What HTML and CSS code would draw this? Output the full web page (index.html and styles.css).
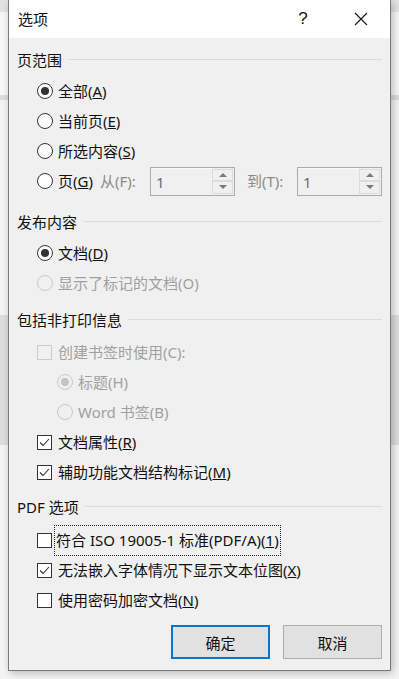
FILE: index.html
```html
<!DOCTYPE html>
<html>
  <head>
    <title>选项</title>
    <link rel="stylesheet" href="styles.css">
  </head>
  <body>

    <div class="dialog">

      <!-- TITLE BAR -->
      <div class="titlebar">
        <span class="title">选项</span>
        <span class="help">?</span>
        <span class="close">
          <svg width="14" height="14" viewBox="0 0 14 14">
            <path d="M1 1 L13 13 M13 1 L1 13" stroke="#1a1a1a" stroke-width="1.2" fill="none"/>
          </svg>
        </span>
      </div>

      <div class="content">

        <!-- PAGE RANGE -->
        <div class="group first">
          <div class="groupHead h31">页范围</div>

          <div class="row">
            <span class="radio checked"></span>
            <span>全部(<u>A</u>)</span>
          </div>

          <div class="row">
            <span class="radio"></span>
            <span>当前页(<u>E</u>)</span>
          </div>

          <div class="row">
            <span class="radio"></span>
            <span>所选内容(<u>S</u>)</span>
          </div>

          <div class="row">
            <span class="radio"></span>
            <span class="pageLabel">页(<u>G</u>)</span>
            <span class="rangeLabel from">从(F):</span>
            <div class="spin">
              <span class="spinValue">1</span>
              <span class="spinButtons">
                <span class="spinBtn"><span class="arrowUp"></span></span>
                <span class="spinBtn"><span class="arrowDown"></span></span>
              </span>
            </div>
            <span class="rangeLabel to">到(T):</span>
            <div class="spin">
              <span class="spinValue">1</span>
              <span class="spinButtons">
                <span class="spinBtn"><span class="arrowUp"></span></span>
                <span class="spinBtn"><span class="arrowDown"></span></span>
              </span>
            </div>
          </div>
        </div>

        <!-- PUBLISH WHAT -->
        <div class="group second">
          <div class="groupHead h31">发布内容</div>

          <div class="row">
            <span class="radio checked"></span>
            <span>文档(<u>D</u>)</span>
          </div>

          <div class="row disabled">
            <span class="radio"></span>
            <span>显示了标记的文档(O)</span>
          </div>
        </div>

        <!-- NON-PRINTING INFO -->
        <div class="group third">
          <div class="groupHead h32">包括非打印信息</div>

          <div class="row disabled">
            <span class="checkbox"></span>
            <span>创建书签时使用(C):</span>
          </div>

          <div class="row disabled indent">
            <span class="radio checked"></span>
            <span>标题(H)</span>
          </div>

          <div class="row disabled indent">
            <span class="radio"></span>
            <span>Word 书签(B)</span>
          </div>

          <div class="row">
            <span class="checkbox checked">
              <svg width="13" height="13" viewBox="0 0 13 13"><path d="M2 6.5 L5 9.5 L11 3" stroke="#333" stroke-width="1.1" fill="none"/></svg>
            </span>
            <span>文档属性(<u>R</u>)</span>
          </div>

          <div class="row">
            <span class="checkbox checked">
              <svg width="13" height="13" viewBox="0 0 13 13"><path d="M2 6.5 L5 9.5 L11 3" stroke="#333" stroke-width="1.1" fill="none"/></svg>
            </span>
            <span>辅助功能文档结构标记(<u>M</u>)</span>
          </div>
        </div>

        <!-- PDF OPTIONS -->
        <div class="group fourth">
          <div class="groupHead h33">PDF 选项</div>

          <div class="row">
            <span class="checkbox"></span>
            <span class="focus">符合 ISO 19005-1 标准(PDF/A)(<u>1</u>)</span>
          </div>

          <div class="row">
            <span class="checkbox checked">
              <svg width="13" height="13" viewBox="0 0 13 13"><path d="M2 6.5 L5 9.5 L11 3" stroke="#333" stroke-width="1.1" fill="none"/></svg>
            </span>
            <span>无法嵌入字体情况下显示文本位图(<u>X</u>)</span>
          </div>

          <div class="row">
            <span class="checkbox"></span>
            <span>使用密码加密文档(<u>N</u>)</span>
          </div>
        </div>

        <div class="buttons">
          <button class="btn primary">确定</button>
          <button class="btn">取消</button>
        </div>

      </div>
    </div>

  </body>
</html>
```

FILE: styles.css
```css
body{
  margin: 0;
  height: 679px;
  overflow: hidden;
  font-family: "Noto Sans", "Noto Sans CJK SC", sans-serif;
  font-size: 15px;
  color: #111;
  /* the window behind the dialog */
  background: linear-gradient(to bottom,
    #e3e3e3 0, #e3e3e3 12px,
    #f7f7f7 12px, #f7f7f7 95px,
    #dcdcdc 95px, #dcdcdc 100px,
    #f4f4f4 100px, #f4f4f4 315px,
    #dddddd 315px, #dddddd 445px,
    #f4f4f4 445px);
}

.dialog{
  margin-left: 8px;
  width: 383px;
  height: 671px;
  box-sizing: border-box;
  border: 1px solid #7a7a7a;
  border-top: none;
  background-color: #f0f0f0;
  box-shadow: 2px 2px 8px rgba(0, 0, 0, 0.25);
  display: flex;
  flex-direction: column;
}

.titlebar{
  height: 38px;
  background-color: white;
  display: flex;
  align-items: center;
  padding-left: 9px;
}

.title{
  flex: 1;
  line-height: 20px;
}

.help{
  width: 20px;
  text-align: center;
  font-size: 17px;
  line-height: 20px;
  font-family: "Liberation Sans", sans-serif;
  margin-right: 38px;
}

.close{
  width: 20px;
  height: 20px;
  display: flex;
  align-items: center;
  justify-content: center;
  margin-right: 19px;
}

.content{
  padding: 0 8px 0 8px;
}

.group.first{ margin-top: 7px; }
.group.second{ margin-top: 11px; }
.group.third{ margin-top: 7px; }
.group.fourth{ margin-top: 5px; }

.groupHead{
  display: flex;
  align-items: flex-start;
  gap: 6px;
  line-height: 30px;
  height: 31px;
}

.groupHead::after{
  content: "";
  flex: 1;
  height: 1px;
  background-color: #dcdcdc;
  margin-top: 14px;
}

.h31{ height: 31px; }
.h32{ height: 32px; }
.h33{ height: 33px; }

.row{
  height: 30px;
  display: flex;
  align-items: center;
  padding-left: 20px;
  line-height: 20px;
  white-space: nowrap;
}

.row.indent{
  padding-left: 40px;
}

.row.disabled{
  color: #a0a0a0;
}

.radio{
  width: 16px;
  height: 16px;
  box-sizing: border-box;
  border: 1px solid #333;
  border-radius: 50%;
  background-color: white;
  margin-right: 5px;
  display: flex;
  align-items: center;
  justify-content: center;
  flex-shrink: 0;
}

.radio.checked::after{
  content: "";
  width: 8px;
  height: 8px;
  border-radius: 50%;
  background-color: #333;
}

.disabled .radio{
  border-color: #c8c8c8;
  background-color: #f0f0f0;
}

.disabled .radio.checked::after{
  background-color: #c4c4c4;
}

.checkbox{
  width: 15px;
  height: 15px;
  box-sizing: border-box;
  border: 1px solid #333;
  background-color: white;
  margin-right: 6px;
  display: flex;
  align-items: center;
  justify-content: center;
  flex-shrink: 0;
}

.disabled .checkbox{
  border-color: #cccccc;
  background-color: #f0f0f0;
}

.focus{
  outline: 1px dotted #222;
  outline-offset: 0;
  height: 29px;
  display: flex;
  align-items: center;
  padding: 0 1px;
  margin-left: -3px;
}

/* fixed widths keep the two page boxes where they belong */
.pageLabel{
  width: 50px;
}

.rangeLabel{
  color: #8a8a8a;
  width: 50px;
  flex-shrink: 0;
}

.to{ margin-left: 12px; }

.spin{
  width: 85px;
  height: 29px;
  box-sizing: border-box;
  border: 1px solid #ababab;
  background-color: #f0f0f0;
  display: flex;
  flex-shrink: 0;
}

.spinValue{
  flex: 1;
  color: #6d6d6d;
  padding-left: 5px;
  line-height: 27px;
  border-top: 1px solid #fafafa;
}

.spinButtons{
  width: 21px;
  display: flex;
  flex-direction: column;
  padding: 1px 1px 1px 0;
}

.spinBtn{
  flex: 1;
  border: 1px solid #dcdcdc;
  display: flex;
  align-items: center;
  justify-content: center;
}

.arrowUp{
  width: 0;
  height: 0;
  border-left: 4px solid transparent;
  border-right: 4px solid transparent;
  border-bottom: 4px solid #7a7a7a;
}

.arrowDown{
  width: 0;
  height: 0;
  border-left: 4px solid transparent;
  border-right: 4px solid transparent;
  border-top: 4px solid #7a7a7a;
}

.buttons{
  margin-top: 10px;
  display: flex;
  justify-content: flex-end;
  gap: 13px;
}

.btn{
  width: 99px;
  height: 34px;
  box-sizing: border-box;
  border: 1px solid #adadad;
  background-color: #e1e1e1;
  font-family: "Noto Sans CJK SC", sans-serif;
  font-size: 15px;
  color: #111;
  padding: 0;
  cursor: pointer;
}

.btn.primary{
  border: 2px solid #0078d7;
}
```
